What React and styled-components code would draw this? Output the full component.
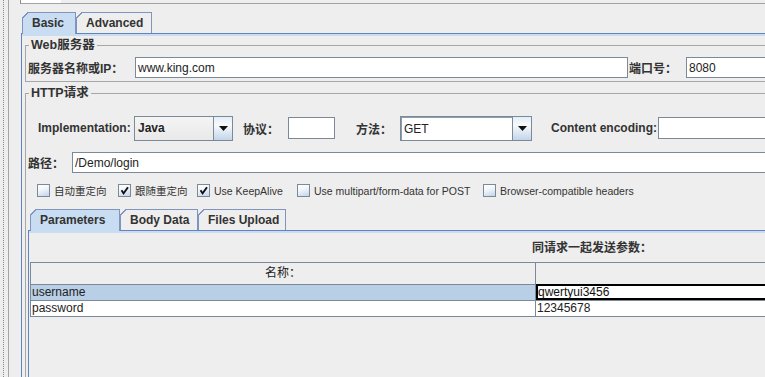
import React from 'react';
import styled, { createGlobalStyle } from 'styled-components';

const FONT = '"Liberation Sans", "Noto Sans CJK SC", sans-serif';

const Global = createGlobalStyle`
  html, body { margin: 0; padding: 0; background: #eeeeee; }
  body { width: 765px; height: 377px; overflow: hidden; font-family: ${FONT}; color: #333333; }
  *, *::before, *::after { box-sizing: border-box; }
`;

const Window = styled.div`
  display: flex;
  width: 765px;
  height: 377px;
  overflow: hidden;
  background: #eeeeee;
`;

const Gutter = styled.div`
  flex: none;
  width: 6px;
  height: 100%;
  margin-left: 3px;
  border-left: 1px dotted #8a8a8a;
  border-right: 1px solid #a4a4a4;
`;

const Main = styled.div`
  flex: none;
  width: 800px;
  height: 400px;
  margin-left: 11px;
  display: flex;
  flex-direction: column;
`;

const TopBox = styled.div`
  flex: none;
  height: 4px;
  display: flex;
  border-left: 1px solid #8e8e8e;
  border-bottom: 1px solid #a3a3a3;
`;

const WhiteStub = styled.div`
  width: 40px;
  background: #ffffff;
`;

const Tabbed = styled.div`
  display: flex;
  flex-direction: column;
  flex: 1;
  margin-top: ${p => p.$mt || 0}px;
  margin-left: ${p => p.$ml || 0}px;
`;

const TabStrip = styled.div`
  flex: none;
  display: flex;
  align-items: flex-end;
  padding-left: ${p => p.$pl}px;
`;

const Tab = styled.div`
  position: relative;
  z-index: ${p => (p.$active ? 2 : 1)};
  flex: none;
  width: ${p => p.$w}px;
  height: ${p => (p.$active ? 22 : 21)}px;
  margin-bottom: ${p => (p.$active ? -1 : 0)}px;
  padding: 0 0 ${p => (p.$active ? 1 : 0)}px 9px;
  display: flex;
  align-items: center;
  font-weight: bold;
  font-size: 12px;
  color: #333333;
  white-space: nowrap;
  background: ${p => (p.$active ? '#c8ddf2' : '#eeeeee')};
  border: 1px solid #7f95bd;
  border-bottom: none;
  &::before {
    content: '';
    position: absolute;
    left: -1px;
    top: -1px;
    width: 7px;
    height: 7px;
    background: linear-gradient(135deg, #eeeeee 0 3.9px, #7f95bd 3.9px 5px, transparent 5px);
  }
`;

const TabPanel = styled.div`
  flex: 1;
  display: flex;
  flex-direction: column;
  border-top: 1px solid #6382bf;
  border-left: 1px solid #6382bf;
  box-shadow: inset 0 2px 0 #c8ddf2;
`;

const Group = styled.fieldset`
  flex: ${p => (p.$grow ? 1 : 'none')};
  display: flex;
  flex-direction: column;
  min-width: 0;
  margin: ${p => p.$mt}px 0 0 3px;
  padding: 0 0 3px 2px;
  border: 1px solid #a6a6a6;
`;

const Legend = styled.legend`
  margin-left: 1px;
  padding: 0 2px;
  font-family: ${FONT};
  font-weight: bold;
  font-size: 12.5px;
  line-height: 14px;
  color: #333333;
`;

const Row = styled.div`
  flex: none;
  display: flex;
  align-items: center;
  height: ${p => p.$h}px;
  margin-top: ${p => p.$mt || 0}px;
  padding-left: ${p => p.$pl || 0}px;
`;

const Label = styled.span`
  flex: none;
  width: ${p => p.$w}px;
  margin-left: ${p => p.$ml || 0}px;
  font-weight: bold;
  font-size: 12px;
  white-space: nowrap;
  color: #333333;
`;

const Field = styled.div`
  flex: none;
  width: ${p => p.$w}px;
  height: ${p => p.$h || 21}px;
  display: flex;
  align-items: center;
  padding-left: 2px;
  background: #ffffff;
  border: 1px solid #7a8a99;
  font-size: 12px;
  color: #222222;
  white-space: nowrap;
  overflow: hidden;
`;

const Combo = styled.div`
  flex: none;
  display: flex;
  width: ${p => p.$w}px;
  height: 25px;
  border: 1px solid #7a8a99;
  background: ${p => (p.$editable ? '#ffffff' : '#eeeeee')};
`;

const ComboValue = styled.div`
  flex: 1;
  display: flex;
  align-items: center;
  padding-left: ${p => (p.$editable ? 2 : 3)}px;
  font-size: 12px;
  font-weight: ${p => (p.$editable ? 'normal' : 'bold')};
  color: #222222;
  border-left: ${p => (p.$editable ? '1px solid #8f9cab' : 'none')};
  border-top: ${p => (p.$editable ? '1px solid #8f9cab' : 'none')};
  background: ${p => (p.$editable ? '#ffffff' : 'linear-gradient(#f4f4f4, #e9e9e9)')};
`;

const ComboButton = styled.div`
  flex: none;
  width: 19px;
  display: flex;
  align-items: center;
  justify-content: center;
  border-left: 1px solid #7a8a99;
  background: linear-gradient(#e4edf6, #f7fafd 35%, #c3d5e9);
`;

const CheckRow = styled.div`
  flex: none;
  display: flex;
  align-items: center;
  height: 13px;
  margin-top: 11px;
  padding-left: 9px;
`;

const CheckItem = styled.div`
  flex: none;
  display: flex;
  align-items: center;
  gap: 4px;
  width: ${p => (p.$w ? `${p.$w}px` : 'auto')};
  font-size: 10.5px;
  color: #333333;
  white-space: nowrap;
`;

const Box = styled.span`
  flex: none;
  width: 13px;
  height: 13px;
  display: flex;
  align-items: center;
  justify-content: center;
  border: 1px solid #7a8a99;
  background: linear-gradient(160deg, #ffffff 0%, #f2f6fb 40%, #c2d4e8 100%);
`;

const SendLabel = styled.div`
  flex: none;
  margin: 10px 0 0 503px;
  font-weight: bold;
  font-size: 12px;
  line-height: 14px;
  color: #333333;
  white-space: nowrap;
`;

const Table = styled.div`
  flex: none;
  width: 800px;
  margin: 7px 0 0 1px;
  border-left: 1px solid #7a8a99;
  border-top: 1px solid #7a8a99;
`;

const TRow = styled.div`
  display: grid;
  grid-template-columns: 505px 1fr;
  height: ${p => (p.$header ? 22 : 16)}px;
  border-bottom: 1px solid #7a8a99;
`;

const Cell = styled.div`
  display: flex;
  align-items: center;
  justify-content: ${p => (p.$center ? 'center' : 'flex-start')};
  padding-left: ${p => (p.$center ? 0 : 1)}px;
  border-right: ${p => (p.$first ? '1px solid #7a8a99' : 'none')};
  background: ${p => p.$bg || 'transparent'};
  font-size: 12px;
  line-height: 13px;
  color: #222222;
  white-space: nowrap;
  overflow: hidden;
`;

const EditCell = styled.div`
  align-self: start;
  height: 16px;
  margin-top: -1px;
  display: flex;
  align-items: center;
  background: #ffffff;
  border: 2px solid #000000;
  font-size: 12px;
  line-height: 12px;
  color: #111111;
  white-space: nowrap;
`;

const Arrow = () => (
  <svg width="9" height="5" viewBox="0 0 9 5">
    <polygon points="0,0 9,0 4.5,5" fill="#111" />
  </svg>
);

const Check = () => (
  <svg width="11" height="11" viewBox="0 0 11 11">
    <path d="M2.5 5.2 L4.6 8.4 L9 2.2" fill="none" stroke="#111" strokeWidth="1.9" />
  </svg>
);

const CheckBox = ({ checked, label, w }) => (
  <CheckItem $w={w}>
    <Box>{checked && <Check />}</Box>
    <span>{label}</span>
  </CheckItem>
);

export default function App() {
  return (
    <>
      <Global />
      <Window>
        <Gutter />
        <Main>
          <TopBox>
            <WhiteStub />
          </TopBox>
          <Tabbed $mt={8} $ml={1}>
            <TabStrip $pl={1}>
              <Tab $active $w={54}>Basic</Tab>
              <Tab $w={76}>Advanced</Tab>
            </TabStrip>
            <TabPanel>
              <Group $mt={4}>
                <Legend>Web服务器</Legend>
                <Row $h={21} $mt={5}>
                  <Label $w={107}>服务器名称或IP：</Label>
                  <Field $w={493}>www.king.com</Field>
                  <Label $w={57} $ml={1}>端口号：</Label>
                  <Field $w={120}>8080</Field>
                </Row>
              </Group>
              <Group $mt={4} $grow>
                <Legend>HTTP请求</Legend>
                <Row $h={26} $mt={15} $pl={10}>
                  <Label $w={96}>Implementation:</Label>
                  <Combo $w={99}>
                    <ComboValue>Java</ComboValue>
                    <ComboButton><Arrow /></ComboButton>
                  </Combo>
                  <Label $w={45} $ml={10}>协议：</Label>
                  <Field $w={47} $h={22} />
                  <Label $w={44} $ml={21}>方法：</Label>
                  <Combo $w={132} $editable>
                    <ComboValue $editable>GET</ComboValue>
                    <ComboButton><Arrow /></ComboButton>
                  </Combo>
                  <Label $w={107} $ml={19}>Content encoding:</Label>
                  <Field $w={150} $h={22} />
                </Row>
                <Row $h={21} $mt={11}>
                  <Label $w={44}>路径：</Label>
                  <Field $w={700}>/Demo/login</Field>
                </Row>
                <CheckRow>
                  <CheckBox w={81} label="自动重定向" />
                  <CheckBox w={79} checked label="跟随重定向" />
                  <CheckBox w={100} checked label="Use KeepAlive" />
                  <CheckBox w={186} label="Use multipart/form-data for POST" />
                  <CheckBox label="Browser-compatible headers" />
                </CheckRow>
                <Tabbed $mt={12}>
                  <TabStrip $pl={2}>
                    <Tab $active $w={90}>Parameters</Tab>
                    <Tab $w={78}>Body Data</Tab>
                    <Tab $w={88}>Files Upload</Tab>
                  </TabStrip>
                  <TabPanel>
                    <SendLabel>同请求一起发送参数：</SendLabel>
                    <Table>
                      <TRow $header>
                        <Cell $first $center>名称：</Cell>
                        <Cell />
                      </TRow>
                      <TRow>
                        <Cell $first $bg="#b8cfe5">username</Cell>
                        <EditCell>qwertyui3456</EditCell>
                      </TRow>
                      <TRow>
                        <Cell $first $bg="#ffffff">password</Cell>
                        <Cell $bg="#ffffff">12345678</Cell>
                      </TRow>
                    </Table>
                  </TabPanel>
                </Tabbed>
              </Group>
            </TabPanel>
          </Tabbed>
        </Main>
      </Window>
    </>
  );
}
